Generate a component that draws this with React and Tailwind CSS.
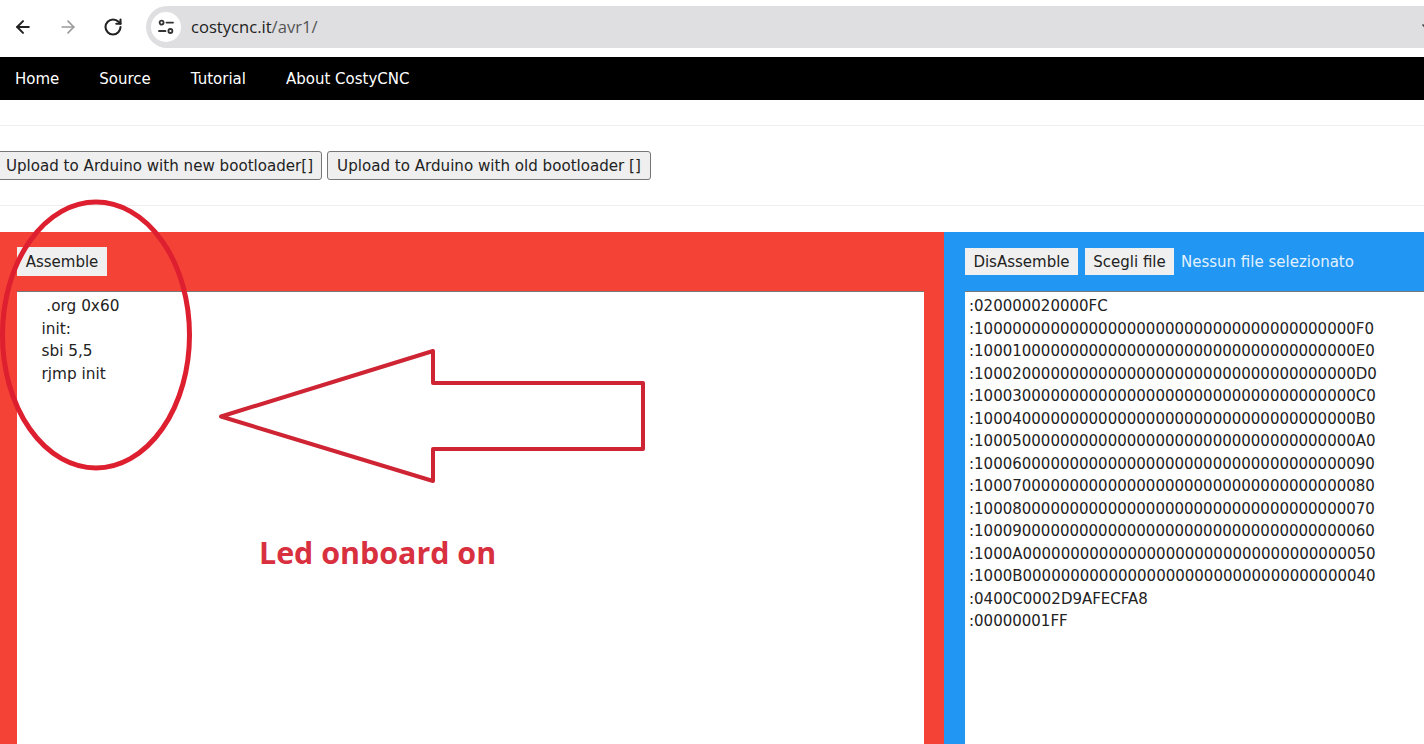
import { ArrowLeft, ArrowRight, RotateCw, ChevronDown } from 'lucide-react';

const UI_FONT = "font-['DejaVu_Sans',Verdana,sans-serif]";

const zeros = '0'.repeat(32);

const HEX_LINES = [
  ':020000020000FC',
  `:10000000${zeros}F0`,
  `:10001000${zeros}E0`,
  `:10002000${zeros}D0`,
  `:10003000${zeros}C0`,
  `:10004000${zeros}B0`,
  `:10005000${zeros}A0`,
  `:10006000${zeros}90`,
  `:10007000${zeros}80`,
  `:10008000${zeros}70`,
  `:10009000${zeros}60`,
  `:1000A000${zeros}50`,
  `:1000B000${zeros}40`,
  ':0400C0002D9AFECFA8',
  ':00000001FF',
].join('\n');

const ASM_SOURCE = '     .org 0x60\n    init:\n    sbi 5,5\n    rjmp init';

const NAV_ITEMS = ['Home', 'Source', 'Tutorial', 'About CostyCNC'];

function SiteSettingsIcon() {
  return (
    <svg width="18" height="18" viewBox="0 0 18 18" fill="none" stroke="#333" strokeWidth="1.8" strokeLinecap="round">
      <circle cx="4.6" cy="4.6" r="2" />
      <path d="M9.5 4.6h6.5" />
      <path d="M2 13h6.5" />
      <circle cx="13.4" cy="13" r="2" />
    </svg>
  );
}

function BrowserBar() {
  return (
    <div className="flex h-[57px] items-center bg-white pb-[3px]">
      <div className="flex w-[146px] items-center text-[#222]">
        <ArrowLeft size={20} strokeWidth={2.4} className="ml-[13px]" />
        <ArrowRight size={20} strokeWidth={2} className="ml-[25px] text-[#9a9a9a]" />
        <RotateCw size={20} strokeWidth={2.5} className="ml-[25px]" />
      </div>
      <div className="flex h-[42px] flex-1 items-center rounded-l-[21px] bg-[#dfdfe1] pl-[5px] pr-px">
        <div className="flex h-[30px] w-[30px] items-center justify-center rounded-full bg-white">
          <SiteSettingsIcon />
        </div>
        <div className="ml-[10px] flex-1 font-['Open_Sans',sans-serif] text-[16.6px] text-[#222]">
          costycnc.it<span className="text-[#555]">/avr1/</span>
        </div>
        <ChevronDown size={16} strokeWidth={2.5} className="mr-[-12px] text-[#444]" />
      </div>
    </div>
  );
}

function PageButton({ children, className = '' }) {
  return (
    <button
      type="button"
      className={`rounded-[3px] border border-[#767676] bg-[#efefef] pt-[2px] text-[15.1px] text-[#222] ${className}`}
    >
      {children}
    </button>
  );
}

function PanelButton({ children, className = '' }) {
  return (
    <button type="button" className={`bg-[#f0f0f0] pt-[2px] text-[15px] text-[#222] ${className}`}>
      {children}
    </button>
  );
}

function CodeArea({ value, className = '' }) {
  return (
    <textarea
      readOnly
      value={value}
      spellCheck={false}
      className={`resize-none overflow-hidden whitespace-pre border-t border-[#777] bg-white pt-[3px] leading-[22.5px] text-[#222] outline-none ${className}`}
    />
  );
}

export default function App() {
  return (
    <div className={`relative h-[744px] w-[1424px] overflow-hidden bg-white ${UI_FONT}`}>
      <BrowserBar />

      <nav className="flex h-[43px] items-center gap-[40px] bg-black pl-[15px] pt-[2px] text-[15px] text-white">
        {NAV_ITEMS.map((item) => (
          <span key={item}>{item}</span>
        ))}
      </nav>

      <div className="mt-[25px] border-t border-[#eee]" />
      <div className="-ml-[3px] mt-[25px] flex h-[29px] gap-[5px]">
        <PageButton className="w-[325px]">Upload to Arduino with new bootloader[]</PageButton>
        <PageButton className="w-[324px]">Upload to Arduino with old bootloader []</PageButton>
      </div>
      <div className="mt-[25px] border-t border-[#eee]" />

      <div className="mt-[26px] flex h-[512px]">
        <section className="flex w-[944px] flex-col bg-[#f44336] pl-[17px] pr-[20px] pt-[15px]">
          <PanelButton className="h-[29px] w-[90px]">Assemble</PanelButton>
          <CodeArea value={ASM_SOURCE} className="mt-[15px] flex-1 pl-[5px] text-[15.3px]" />
        </section>
        <section className="flex w-[480px] flex-col bg-[#2196f3] pl-[21px] pt-[16px]">
          <div className="flex h-[27px] items-center">
            <PanelButton className="h-full w-[113px]">DisAssemble</PanelButton>
            <PanelButton className="ml-[7px] h-full w-[89px]">Scegli file</PanelButton>
            <span className="ml-[7px] pt-[2px] text-[15px] text-[#e3f2fd]">Nessun file selezionato</span>
          </div>
          <CodeArea value={HEX_LINES} className="mt-[16px] flex-1 pl-1 text-[15px]" />
        </section>
      </div>

      {/* hand drawn marks on top of the screenshot */}
      <svg className="absolute left-0 top-0" width="700" height="500" fill="none">
        <ellipse cx="96" cy="335" rx="93.5" ry="133" stroke="#dd1f2f" strokeWidth="5" />
        <path
          d="M221 416.5 433 351V383H643V449H433V481Z"
          stroke="#cf2433"
          strokeWidth="4"
          strokeLinejoin="round"
        />
      </svg>
      <div className="absolute left-[259px] top-[532px] font-['Open_Sans',sans-serif] text-[30.4px] font-bold leading-[42px] text-[#d8303f]">
        Led onboard on
      </div>
    </div>
  );
}
